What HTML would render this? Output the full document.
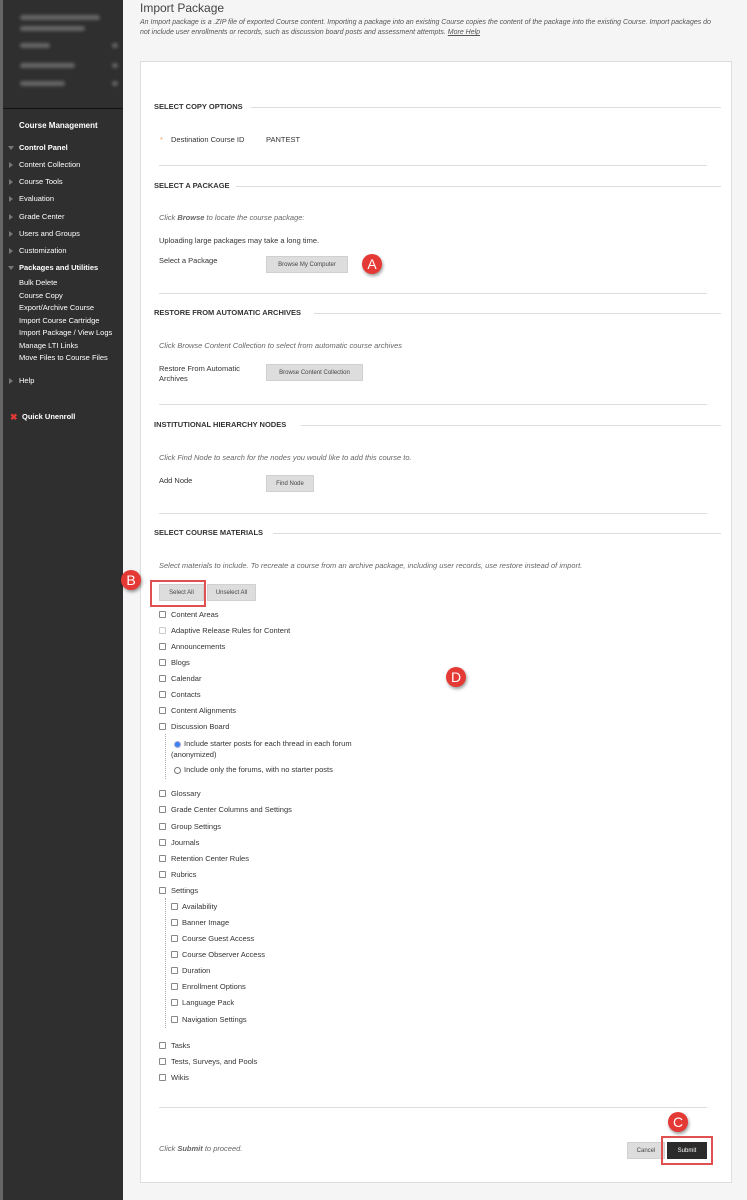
<!DOCTYPE html>
<html><head><meta charset="utf-8"><style>
*{margin:0;padding:0;box-sizing:border-box}
body{width:747px;height:1200px;position:relative;overflow:hidden;background:#f5f5f5;font-family:"Liberation Sans",sans-serif;color:#333}
.t{position:absolute;font-size:7.5px;line-height:10px;white-space:nowrap}
.s{color:#fff;font-size:7.5px}
.b{font-weight:bold}
.i{font-style:italic;color:#666}
.h{position:absolute;font-size:7.5px;font-weight:bold;color:#333;line-height:10px;white-space:nowrap}
.ln{position:absolute;height:1px;background:#ddd}
.cb{position:absolute;width:7px;height:7px;border:1px solid #888;background:#fff;border-radius:1px}
.btn{position:absolute;background:#ddd;border:1px solid #d0d0d0;font-size:6px;color:#444;display:flex;align-items:center;justify-content:center;height:17px}
.circ{position:absolute;width:20px;height:20px;border-radius:50%;background:#e53935;color:#fff;font-size:14px;text-align:center;line-height:20px;box-shadow:1px 2px 3px rgba(0,0,0,.4)}
.blur{position:absolute;height:5px;background:#666;border-radius:3px;filter:blur(1.5px)}
.tri{position:absolute;width:0;height:0;border-top:3px solid transparent;border-bottom:3px solid transparent;border-left:4px solid #777}
.trd{position:absolute;width:0;height:0;border-left:3px solid transparent;border-right:3px solid transparent;border-top:4px solid #777}
</style></head><body>
<div style="position:absolute;left:0;top:0;width:123px;height:1200px;background:#2f2f2f"></div>
<div style="position:absolute;left:0;top:0;width:3px;height:1200px;background:#666"></div>
<div class="blur" style="left:20px;top:15px;width:80px"></div>
<div class="blur" style="left:20px;top:26px;width:65px"></div>
<div class="blur" style="left:20px;top:43px;width:30px"></div>
<div class="blur" style="left:20px;top:63px;width:55px"></div>
<div class="blur" style="left:20px;top:81px;width:45px"></div>
<div class="blur" style="left:112px;top:43px;width:6px"></div>
<div class="blur" style="left:112px;top:63px;width:6px"></div>
<div class="blur" style="left:112px;top:81px;width:6px"></div>
<div style="position:absolute;left:3px;top:108px;width:120px;height:1px;background:#111"></div>
<div class="t s b" style="left:19px;top:121px;font-size:8px">Course Management</div>
<div class="trd" style="left:8px;top:146px"></div><div class="t s b" style="left:19px;top:143px">Control Panel</div>
<div class="tri" style="left:9px;top:162px"></div><div class="t s" style="left:19px;top:160px">Content Collection</div>
<div class="tri" style="left:9px;top:179px"></div><div class="t s" style="left:19px;top:177px">Course Tools</div>
<div class="tri" style="left:9px;top:196px"></div><div class="t s" style="left:19px;top:194px">Evaluation</div>
<div class="tri" style="left:9px;top:214px"></div><div class="t s" style="left:19px;top:212px">Grade Center</div>
<div class="tri" style="left:9px;top:231px"></div><div class="t s" style="left:19px;top:229px">Users and Groups</div>
<div class="tri" style="left:9px;top:248px"></div><div class="t s" style="left:19px;top:246px">Customization</div>
<div class="trd" style="left:8px;top:266px"></div><div class="t s b" style="left:19px;top:263px">Packages and Utilities</div>
<div class="t s" style="left:19px;top:278px">Bulk Delete</div>
<div class="t s" style="left:19px;top:291px">Course Copy</div>
<div class="t s" style="left:19px;top:303px">Export/Archive Course</div>
<div class="t s" style="left:19px;top:316px">Import Course Cartridge</div>
<div class="t s" style="left:19px;top:328px">Import Package / View Logs</div>
<div class="t s" style="left:19px;top:341px">Manage LTI Links</div>
<div class="t s" style="left:19px;top:353px">Move Files to Course Files</div>
<div class="tri" style="left:9px;top:378px"></div><div class="t s" style="left:19px;top:376px">Help</div>
<div class="t b" style="left:10px;top:412px;color:#e53935;font-size:9px">✖</div><div class="t s b" style="left:22px;top:412px">Quick Unenroll</div>

<div class="t" style="left:140px;top:1px;font-size:12px;line-height:14px;color:#444">Import Package</div>
<div class="t i" style="left:140px;top:18px;font-size:7px;color:#555">An Import package is a .ZIP file of exported Course content. Importing a package into an existing Course copies the content of the package into the existing Course. Import packages do</div>
<div class="t i" style="left:140px;top:28px;font-size:7px;color:#555">not include user enrollments or records, such as discussion board posts and assessment attempts. <u>More Help</u></div>

<div style="position:absolute;left:140px;top:61px;width:592px;height:1122px;background:#fff;border:1px solid #ddd"></div>

<div class="h" style="left:154px;top:102px">SELECT COPY OPTIONS</div><div class="ln" style="left:251px;top:107px;width:470px"></div>
<div class="t" style="left:160px;top:135px;color:#f0a060">*</div>
<div class="t" style="left:171px;top:135px">Destination Course ID</div>
<div class="t" style="left:266px;top:135px">PANTEST</div>
<div class="ln" style="left:159px;top:165px;width:548px"></div>

<div class="h" style="left:154px;top:181px">SELECT A PACKAGE</div><div class="ln" style="left:236px;top:186px;width:485px"></div>
<div class="t i" style="left:159px;top:213px">Click <b>Browse</b> to locate the course package:</div>
<div class="t" style="left:159px;top:236px">Uploading large packages may take a long time.</div>
<div class="t" style="left:159px;top:256px">Select a Package</div>
<div class="btn" style="left:266px;top:256px;width:82px">Browse My Computer</div>
<div class="circ" style="left:362px;top:254px">A</div>
<div class="ln" style="left:159px;top:293px;width:548px"></div>

<div class="h" style="left:154px;top:308px">RESTORE FROM AUTOMATIC ARCHIVES</div><div class="ln" style="left:314px;top:313px;width:407px"></div>
<div class="t i" style="left:159px;top:341px">Click Browse Content Collection to select from automatic course archives</div>
<div class="t" style="left:159px;top:364px">Restore From Automatic</div>
<div class="t" style="left:159px;top:374px">Archives</div>
<div class="btn" style="left:266px;top:364px;width:97px">Browse Content Collection</div>
<div class="ln" style="left:159px;top:404px;width:548px"></div>

<div class="h" style="left:154px;top:420px">INSTITUTIONAL HIERARCHY NODES</div><div class="ln" style="left:301px;top:425px;width:420px"></div>
<div class="t i" style="left:159px;top:453px">Click Find Node to search for the nodes you would like to add this course to.</div>
<div class="t" style="left:159px;top:476px">Add Node</div>
<div class="btn" style="left:266px;top:475px;width:48px">Find Node</div>
<div class="ln" style="left:159px;top:513px;width:548px"></div>

<div class="h" style="left:154px;top:528px">SELECT COURSE MATERIALS</div><div class="ln" style="left:273px;top:533px;width:448px"></div>
<div class="t i" style="left:159px;top:561px">Select materials to include. To recreate a course from an archive package, including user records, use restore instead of import.</div>
<div class="btn" style="left:159px;top:584px;width:45px">Select All</div>
<div style="position:absolute;left:150px;top:580px;width:56px;height:27px;border:2px solid #e05050"></div>
<div class="btn" style="left:207px;top:584px;width:49px">Unselect All</div>
<div class="circ" style="left:121px;top:570px">B</div>
<div class="circ" style="left:446px;top:667px">D</div>

<div class="cb" style="left:159px;top:611px"></div><div class="t" style="left:171px;top:610px">Content Areas</div>
<div class="cb" style="left:159px;top:627px;border-color:#ccc"></div><div class="t" style="left:171px;top:626px">Adaptive Release Rules for Content</div>
<div class="cb" style="left:159px;top:643px"></div><div class="t" style="left:171px;top:642px">Announcements</div>
<div class="cb" style="left:159px;top:659px"></div><div class="t" style="left:171px;top:658px">Blogs</div>
<div class="cb" style="left:159px;top:675px"></div><div class="t" style="left:171px;top:674px">Calendar</div>
<div class="cb" style="left:159px;top:691px"></div><div class="t" style="left:171px;top:690px">Contacts</div>
<div class="cb" style="left:159px;top:707px"></div><div class="t" style="left:171px;top:706px">Content Alignments</div>
<div class="cb" style="left:159px;top:723px"></div><div class="t" style="left:171px;top:722px">Discussion Board</div>
<div style="position:absolute;left:165px;top:734px;height:45px;border-left:1px dotted #aaa"></div>
<div style="position:absolute;left:174px;top:741px;width:7px;height:7px;border-radius:50%;background:#3b82f6;border:1px solid #aac"></div>
<div class="t" style="left:184px;top:739px">Include starter posts for each thread in each forum</div>
<div class="t" style="left:171px;top:750px">(anonymized)</div>
<div style="position:absolute;left:174px;top:767px;width:7px;height:7px;border-radius:50%;border:1px solid #777"></div>
<div class="t" style="left:184px;top:765px">Include only the forums, with no starter posts</div>

<div class="cb" style="left:159px;top:790px"></div><div class="t" style="left:171px;top:789px">Glossary</div>
<div class="cb" style="left:159px;top:806px"></div><div class="t" style="left:171px;top:805px">Grade Center Columns and Settings</div>
<div class="cb" style="left:159px;top:823px"></div><div class="t" style="left:171px;top:822px">Group Settings</div>
<div class="cb" style="left:159px;top:839px"></div><div class="t" style="left:171px;top:838px">Journals</div>
<div class="cb" style="left:159px;top:855px"></div><div class="t" style="left:171px;top:854px">Retention Center Rules</div>
<div class="cb" style="left:159px;top:871px"></div><div class="t" style="left:171px;top:870px">Rubrics</div>
<div class="cb" style="left:159px;top:887px"></div><div class="t" style="left:171px;top:886px">Settings</div>
<div style="position:absolute;left:165px;top:898px;height:130px;border-left:1px dotted #aaa"></div>
<div class="cb" style="left:171px;top:903px"></div><div class="t" style="left:182px;top:902px">Availability</div>
<div class="cb" style="left:171px;top:919px"></div><div class="t" style="left:182px;top:918px">Banner Image</div>
<div class="cb" style="left:171px;top:935px"></div><div class="t" style="left:182px;top:934px">Course Guest Access</div>
<div class="cb" style="left:171px;top:951px"></div><div class="t" style="left:182px;top:950px">Course Observer Access</div>
<div class="cb" style="left:171px;top:967px"></div><div class="t" style="left:182px;top:966px">Duration</div>
<div class="cb" style="left:171px;top:983px"></div><div class="t" style="left:182px;top:982px">Enrollment Options</div>
<div class="cb" style="left:171px;top:999px"></div><div class="t" style="left:182px;top:998px">Language Pack</div>
<div class="cb" style="left:171px;top:1016px"></div><div class="t" style="left:182px;top:1015px">Navigation Settings</div>
<div class="cb" style="left:159px;top:1042px"></div><div class="t" style="left:171px;top:1041px">Tasks</div>
<div class="cb" style="left:159px;top:1058px"></div><div class="t" style="left:171px;top:1057px">Tests, Surveys, and Pools</div>
<div class="cb" style="left:159px;top:1074px"></div><div class="t" style="left:171px;top:1073px">Wikis</div>

<div class="ln" style="left:159px;top:1107px;width:548px"></div>
<div class="t i" style="left:159px;top:1144px">Click <b>Submit</b> to proceed.</div>
<div class="btn" style="left:627px;top:1142px;width:38px">Cancel</div>
<div class="btn" style="left:667px;top:1142px;width:40px;background:#2b2b2b;border-color:#2b2b2b;color:#fff">Submit</div>
<div style="position:absolute;left:661px;top:1136px;width:52px;height:29px;border:2px solid #e05050"></div>
<div class="circ" style="left:668px;top:1112px">C</div>
</body></html>
